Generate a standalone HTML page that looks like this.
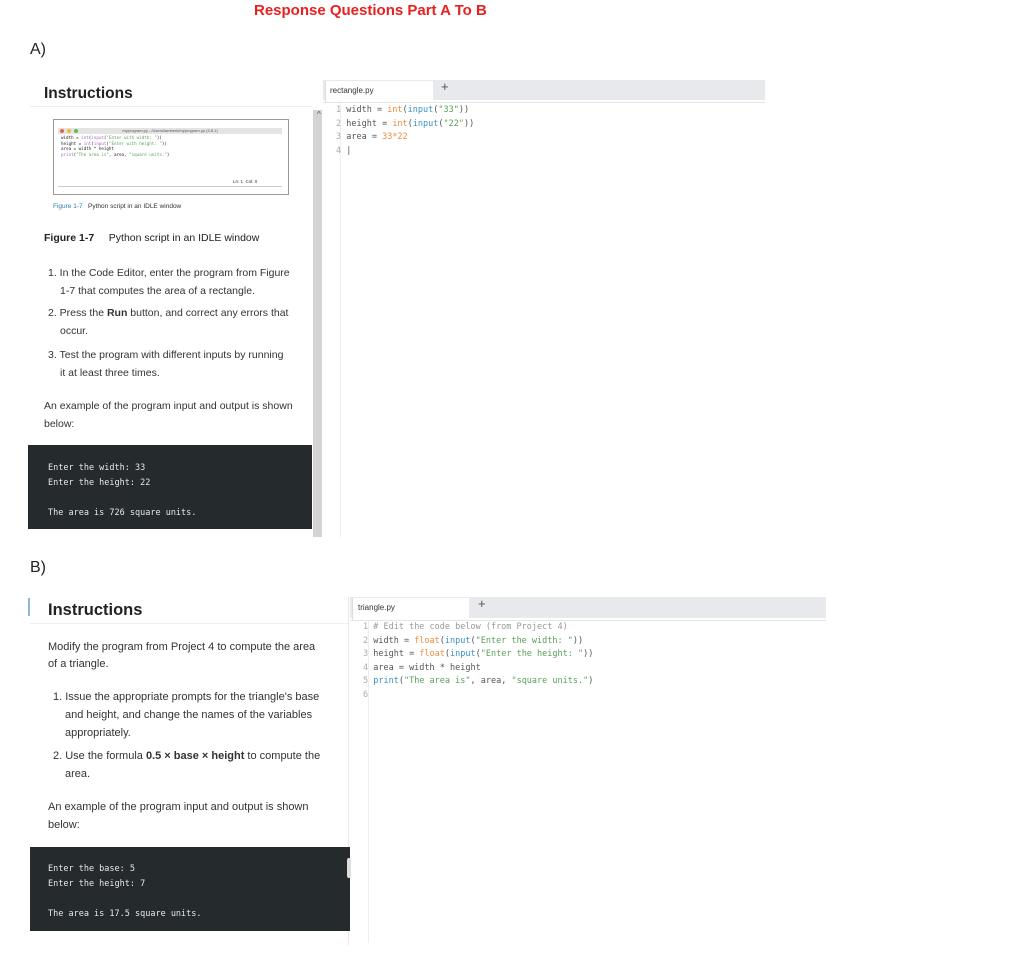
<!DOCTYPE html>
<html><head><meta charset="utf-8"><style>
body{margin:0;width:1024px;height:964px;background:#fff;position:relative;font-family:"Liberation Sans","DejaVu Sans",sans-serif;color:#333;overflow:hidden}
.a{position:absolute}
.mono{font-family:"DejaVu Sans Mono","Liberation Mono",monospace}
.p{font-size:10.5px;line-height:18px;color:#333}
.pb{font-size:11px;line-height:18px;color:#333}
.cl{font-size:8.5px;line-height:13.6px;white-space:pre;color:#555}
.n{color:#aaa}.o{color:#f08a3c}.b{color:#3a8fc8}.g{color:#5aa05a}
</style></head><body>
<div class="a" style="left:254px;top:2px;font-size:15px;font-weight:bold;color:#e8201f">Response Questions Part A To B</div>
<div class="a" style="left:30px;top:41px;font-size:16px;color:#222">A)</div>
<div class="a" style="left:44px;top:85px;font-size:15.5px;font-weight:bold;color:#222">Instructions</div>
<div class="a" style="left:30px;top:106px;width:282px;height:1px;background:#eee"></div>
<div class="a" style="left:53px;top:119px;width:234px;height:74px;border:1px solid #999;background:#fff"></div>
<div class="a" style="left:58px;top:128px;width:224px;height:6px;background:#e4e4e4;font-size:4px;color:#555;text-align:center;line-height:6px">myprogram.py - /Users/lamberk/myprogram.py (3.8.1)</div>
<div class="a" style="left:60px;top:129px;width:4px;height:4px;border-radius:50%;background:#f05a4e"></div>
<div class="a" style="left:67px;top:129px;width:4px;height:4px;border-radius:50%;background:#f5b93a"></div>
<div class="a" style="left:74px;top:129px;width:4px;height:4px;border-radius:50%;background:#55c04d"></div>
<div class="a mono" style="left:61px;top:135px;font-size:4.2px;line-height:5.5px;white-space:pre;color:#222">width = <span style="color:#a6c">int</span>(<span style="color:#a6c">input</span>(<span class="g">"Enter with width: "</span>))
height = <span style="color:#a6c">int</span>(<span style="color:#a6c">input</span>(<span class="g">"Enter with height: "</span>))
area = width * height
<span style="color:#a6c">print</span>(<span class="g">"The area is"</span>, area, <span class="g">"square units."</span>)</div>
<div class="a" style="left:58px;top:186px;width:224px;height:1px;background:#ccc"></div>
<div class="a" style="left:233px;top:179px;font-size:4.5px;color:#333">Ln: 1 &nbsp;Col: 0</div>
<div class="a" style="left:53px;top:203px;font-size:6.5px;color:#333"><span style="color:#2a7fb0">Figure 1-7</span> &nbsp; Python script in an IDLE window</div>
<div class="a" style="left:44px;top:232px;font-size:10.5px;color:#222"><b>Figure 1-7</b> &nbsp;&nbsp;&nbsp; Python script in an IDLE window</div>
<div class="a p" style="left:48px;top:264px;width:270px">1. In the Code Editor, enter the program from Figure<br><span style="padding-left:12px">1-7 that computes the area of a rectangle.</span></div>
<div class="a p" style="left:48px;top:304px;width:270px">2. Press the <b>Run</b> button, and correct any errors that<br><span style="padding-left:12px">occur.</span></div>
<div class="a p" style="left:48px;top:346px;width:270px">3. Test the program with different inputs by running<br><span style="padding-left:12px">it at least three times.</span></div>
<div class="a p" style="left:44px;top:397px;width:270px">An example of the program input and output is shown<br>below:</div>
<div class="a" style="left:28px;top:445px;width:284px;height:84px;background:#252a2d"></div>
<div class="a mono" style="left:48px;top:461px;font-size:8.5px;line-height:15px;color:#e8e8e8;white-space:pre">Enter the width: 33
Enter the height: 22

The area is 726 square units.</div>
<div class="a" style="left:313px;top:110px;width:9px;height:427px;background:#d4d4d4"></div>
<div class="a" style="left:317px;top:110px;font-size:8px;color:#555">^</div>
<div class="a" style="left:323px;top:80px;width:442px;height:20px;background:#e8e9ec"></div>
<div class="a" style="left:325px;top:81px;width:107px;height:21px;background:#fff;border-left:1px solid #ddd"></div>
<div class="a" style="left:330px;top:86px;font-size:8px;color:#333">rectangle.py</div>
<div class="a" style="left:441px;top:79px;font-size:13px;color:#555">+</div>
<div class="a" style="left:323px;top:102px;width:442px;height:1px;background:#e5e5e5"></div>
<div class="a" style="left:340px;top:103px;width:1px;height:434px;background:#eee"></div>
<div class="a mono cl" style="left:336px;top:104px"><span class="n">1</span> width = <span class="o">int</span>(<span class="b">input</span>(<span class="g">"33"</span>))
<span class="n">2</span> height = <span class="o">int</span>(<span class="b">input</span>(<span class="g">"22"</span>))
<span class="n">3</span> area = <span class="o">33*22</span>
<span class="n">4</span> |</div>
<div class="a" style="left:30px;top:559px;font-size:16px;color:#222">B)</div>
<div class="a" style="left:28px;top:598px;width:2px;height:18px;background:#8ab8e0"></div>
<div class="a" style="left:48px;top:601px;font-size:16.5px;font-weight:bold;color:#222">Instructions</div>
<div class="a" style="left:30px;top:623px;width:318px;height:1px;background:#eee"></div>
<div class="a" style="left:348px;top:597px;width:1px;height:348px;background:#e8e8e8"></div>
<div class="a pb" style="left:48px;top:639px;width:300px;line-height:17px">Modify the program from Project 4 to compute the area<br>of a triangle.</div>
<div class="a pb" style="left:53px;top:688px;width:300px">1. Issue the appropriate prompts for the triangle's base<br><span style="padding-left:12px">and height, and change the names of the variables</span><br><span style="padding-left:12px">appropriately.</span></div>
<div class="a pb" style="left:53px;top:747px;width:300px">2. Use the formula <b>0.5 × base × height</b> to compute the<br><span style="padding-left:12px">area.</span></div>
<div class="a pb" style="left:48px;top:798px;width:300px">An example of the program input and output is shown<br>below:</div>
<div class="a" style="left:30px;top:847px;width:320px;height:84px;background:#252a2d"></div>
<div class="a" style="left:347px;top:858px;width:4px;height:20px;background:#ddd;border-radius:2px"></div>
<div class="a mono" style="left:48px;top:862px;font-size:8.5px;line-height:15px;color:#e8e8e8;white-space:pre">Enter the base: 5
Enter the height: 7

The area is 17.5 square units.</div>
<div class="a" style="left:350px;top:597px;width:476px;height:21px;background:#e8e9ec"></div>
<div class="a" style="left:352px;top:598px;width:116px;height:22px;background:#fff;border-left:1px solid #ddd"></div>
<div class="a" style="left:358px;top:603px;font-size:8px;color:#333">triangle.py</div>
<div class="a" style="left:478px;top:596px;font-size:13px;color:#555">+</div>
<div class="a" style="left:350px;top:620px;width:476px;height:1px;background:#e5e5e5"></div>
<div class="a" style="left:368px;top:621px;width:1px;height:322px;background:#eee"></div>
<div class="a mono cl" style="left:363px;top:621px"><span class="n">1</span> <span style="color:#999"># Edit the code below (from Project 4)</span>
<span class="n">2</span> width = <span class="o">float</span>(<span class="b">input</span>(<span class="g">"Enter the width: "</span>))
<span class="n">3</span> height = <span class="o">float</span>(<span class="b">input</span>(<span class="g">"Enter the height: "</span>))
<span class="n">4</span> area = width * height
<span class="n">5</span> <span class="b">print</span>(<span class="g">"The area is"</span>, area, <span class="g">"square units."</span>)
<span class="n">6</span></div>
</body></html>
